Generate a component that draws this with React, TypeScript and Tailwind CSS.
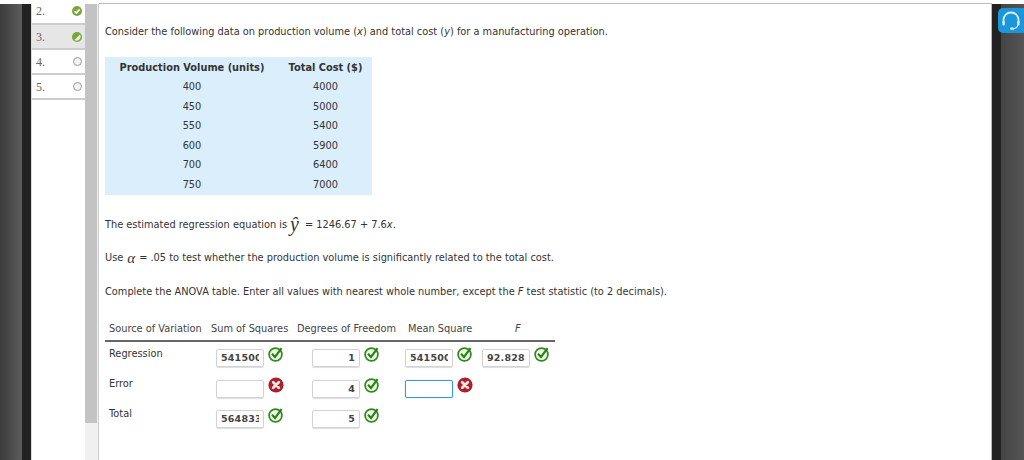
import React from "react";

const QUESTIONS = [
  { n: "2.", state: "done", row: "h-[21px] pb-[5px]" },
  { n: "3.", state: "half", row: "h-[25px]" },
  { n: "4.", state: "empty", row: "h-[25px]" },
  { n: "5.", state: "empty", row: "h-[25px]" },
];

const DATA = [
  ["400", "4000"],
  ["450", "5000"],
  ["550", "5400"],
  ["600", "5900"],
  ["700", "6400"],
  ["750", "7000"],
];

const StatusDot = ({ state }: { state: string }) => {
  if (state === "empty") {
    return <span className="h-[9px] w-[9px] rounded-full border border-[#999] bg-[#f4f4f4]" />;
  }
  return (
    <svg width="10" height="10" viewBox="0 0 10 10">
      <circle cx="5" cy="5" r="5" fill="#7aa63c" />
      {state === "half" ? (
        <path d="M8 2.6 A4 4 0 0 1 2.4 8 Z" fill="#e6efd8" />
      ) : (
        <path d="M2.6 5.2 L4.4 7 L7.6 3.4" fill="none" stroke="#fff" strokeWidth="1.6" />
      )}
    </svg>
  );
};

const Check = () => (
  <svg width="16" height="16" viewBox="0 0 16 16" className="shrink-0">
    <circle cx="7.5" cy="8.5" r="6.4" fill="#eef9e4" stroke="#2f8a1f" strokeWidth="1.7" />
    <path d="M4 7.8 L7 11 L13.6 2.2" fill="none" stroke="#2b7f1c" strokeWidth="2.1" />
  </svg>
);

const Cross = () => (
  <svg width="16" height="16" viewBox="0 0 16 16" className="shrink-0">
    <circle cx="8" cy="8" r="7.6" fill="#ad1f29" />
    <path d="M5.2 5.2 L10.8 10.8 M10.8 5.2 L5.2 10.8" stroke="#f6e6e6" strokeWidth="2.8" strokeLinecap="round" />
  </svg>
);

const Field = ({
  value,
  status,
  right,
  focused,
}: {
  value?: string;
  status?: "ok" | "bad";
  right?: boolean;
  focused?: boolean;
}) => (
  <div className="flex items-start gap-[4px]">
    <div
      className={`mt-[7px] flex h-[18px] w-[48px] shrink-0 items-center rounded-[2px] border px-[4px] text-[9.5px] font-bold text-[#444] ${
        focused
          ? "border-[#3b97e3] shadow-[0_0_1px_#3b97e3]"
          : "border-[#d2d2d2] shadow-[0_1px_1px_#ddd]"
      } ${right ? "justify-end" : ""}`}
    >
      <span className="block overflow-hidden tracking-[0.2px] whitespace-nowrap">{value}</span>
    </div>
    <div className="mt-[4px]">
      {status === "ok" && <Check />}
      {status === "bad" && <Cross />}
    </div>
  </div>
);

export default function App() {
  return (
    <div className="relative flex h-[460px] w-[1024px] overflow-hidden bg-white font-['DejaVu_Sans',sans-serif] text-[9.8px] text-[#333]">
      {/* left rail */}
      <div className="mt-[4px] flex w-[31px] shrink-0">
        <div className="w-[22px] bg-gradient-to-r from-[#3c3c3c] to-[#5c5c5c]" />
        <div className="w-[9px] bg-[#222]" />
      </div>

      {/* question list */}
      <div className="mt-[4px] w-[54px] shrink-0 border-l border-[#ddd]">
        {QUESTIONS.map((q) => (
          <div
            key={q.n}
            className={`flex items-center justify-between border-b-2 border-[#ccc] pr-[3px] pl-[4px] ${q.row} ${
              q.state === "half" ? "bg-[#e6e6e6]" : "bg-white"
            }`}
          >
            <span className="font-['Liberation_Serif',serif] text-[12px] text-[#666]">{q.n}</span>
            <StatusDot state={q.state} />
          </div>
        ))}
      </div>

      {/* scrollbar */}
      <div className="mt-[4px] w-[14px] shrink-0 border-r border-[#ccc] bg-[#f0f0f0]">
        <div className="mr-[1px] h-[419px] bg-[#c3c3c3]" />
      </div>

      {/* main area */}
      <div className="mt-[3px] flex min-w-0 flex-1 flex-col border-t border-r border-[#bbb]">
        <div className="pt-[22px] pl-[6px]">
          <p className="h-[12px] leading-[12px]">
            Consider the following data on production volume (<i>x</i>) and total cost (<i>y</i>) for a manufacturing operation.
          </p>

          <table className="mt-[19px] w-[267px] table-fixed border-collapse bg-[#dbeefc] text-center">
            <thead>
              <tr className="h-[21px] font-bold text-[#333]">
                <th className="w-[174px] pt-[2px] font-bold">Production Volume (units)</th>
                <th className="pt-[2px] font-bold">Total Cost ($)</th>
              </tr>
            </thead>
            <tbody>
              {DATA.map(([a, b]) => (
                <tr key={a} className="h-[19.5px]">
                  <td>{a}</td>
                  <td>{b}</td>
                </tr>
              ))}
            </tbody>
          </table>

          <p className="mt-[20px] flex h-[20px] items-center leading-[12px]">
            The estimated regression equation is
            <span className="mr-[6px] ml-[3px] -translate-y-[1px] font-['Liberation_Serif',serif] text-[20px] leading-none italic">
              ŷ
            </span>
            = 1246.67 + 7.6<i>x</i>.
          </p>
          <p className="mt-[17px] flex h-[12px] items-center leading-[12px]">
            Use
            <span className="mx-[4px] font-['Liberation_Serif',serif] text-[15px] italic">α</span>
            = .05 to test whether the production volume is significantly related to the total cost.
          </p>
          <p className="mt-[22px] h-[12px] leading-[12px]">
            Complete the ANOVA table. Enter all values with nearest whole number, except the <i>F</i> test statistic (to 2 decimals).
          </p>

          <div className="mt-[24px] grid w-[450px] grid-cols-[111px_96px_93px_77px_73px] grid-rows-[20px_31px_30px_30px]">
            <div className="col-span-5 grid grid-cols-subgrid items-start border-b-2 border-[#666] pt-[1px] leading-[12px] text-[#444]">
              <span className="pl-[4px]">Source of Variation</span>
              <span className="-ml-[5px] whitespace-nowrap">Sum of Squares</span>
              <span className="-ml-[15px] whitespace-nowrap">Degrees of Freedom</span>
              <span className="pl-[3px]">Mean Square</span>
              <span className="pl-[33px] italic">F</span>
            </div>

            <span className="pt-[6px] pl-[4px] leading-[12px]">Regression</span>
            <Field value="541500" status="ok" />
            <Field value="1" status="ok" right />
            <Field value="541500" status="ok" />
            <Field value="92.828" status="ok" />

            <span className="pt-[5px] pl-[4px] leading-[12px]">Error</span>
            <Field status="bad" />
            <Field value="4" status="ok" right />
            <Field status="bad" focused />
            <div />

            <span className="pt-[5px] pl-[4px] leading-[12px]">Total</span>
            <Field value="564833" status="ok" />
            <Field value="5" status="ok" right />
            <div />
            <div />
          </div>
        </div>
      </div>

      {/* right rail with help button */}
      <div className="mt-[4px] flex w-[32px] shrink-0">
        <div className="w-[9px] bg-[#222]" />
        <div className="flex-1 bg-gradient-to-r from-[#444] to-[#555]" />
      </div>
      <div className="absolute top-[8px] left-[998px] flex h-[25px] w-[26px] items-center justify-center rounded-l-[5px] bg-[#1a96dc]">
        <svg width="22" height="22" viewBox="0 0 22 22" fill="none">
          <path d="M3.5 13 V10 A7.5 7.5 0 0 1 18.5 10 V13" stroke="#dcecf6" strokeWidth="1.8" />
          <rect x="2.4" y="11" width="2.4" height="4.5" rx="1" fill="#dcecf6" />
          <rect x="17.2" y="11" width="2.4" height="4.5" rx="1" fill="#dcecf6" />
          <path d="M18 15 Q17 18.6 13 18.8" stroke="#dcecf6" strokeWidth="1.2" />
          <rect x="10" y="17.6" width="4" height="2.2" rx="1" fill="#dcecf6" />
        </svg>
      </div>
    </div>
  );
}
